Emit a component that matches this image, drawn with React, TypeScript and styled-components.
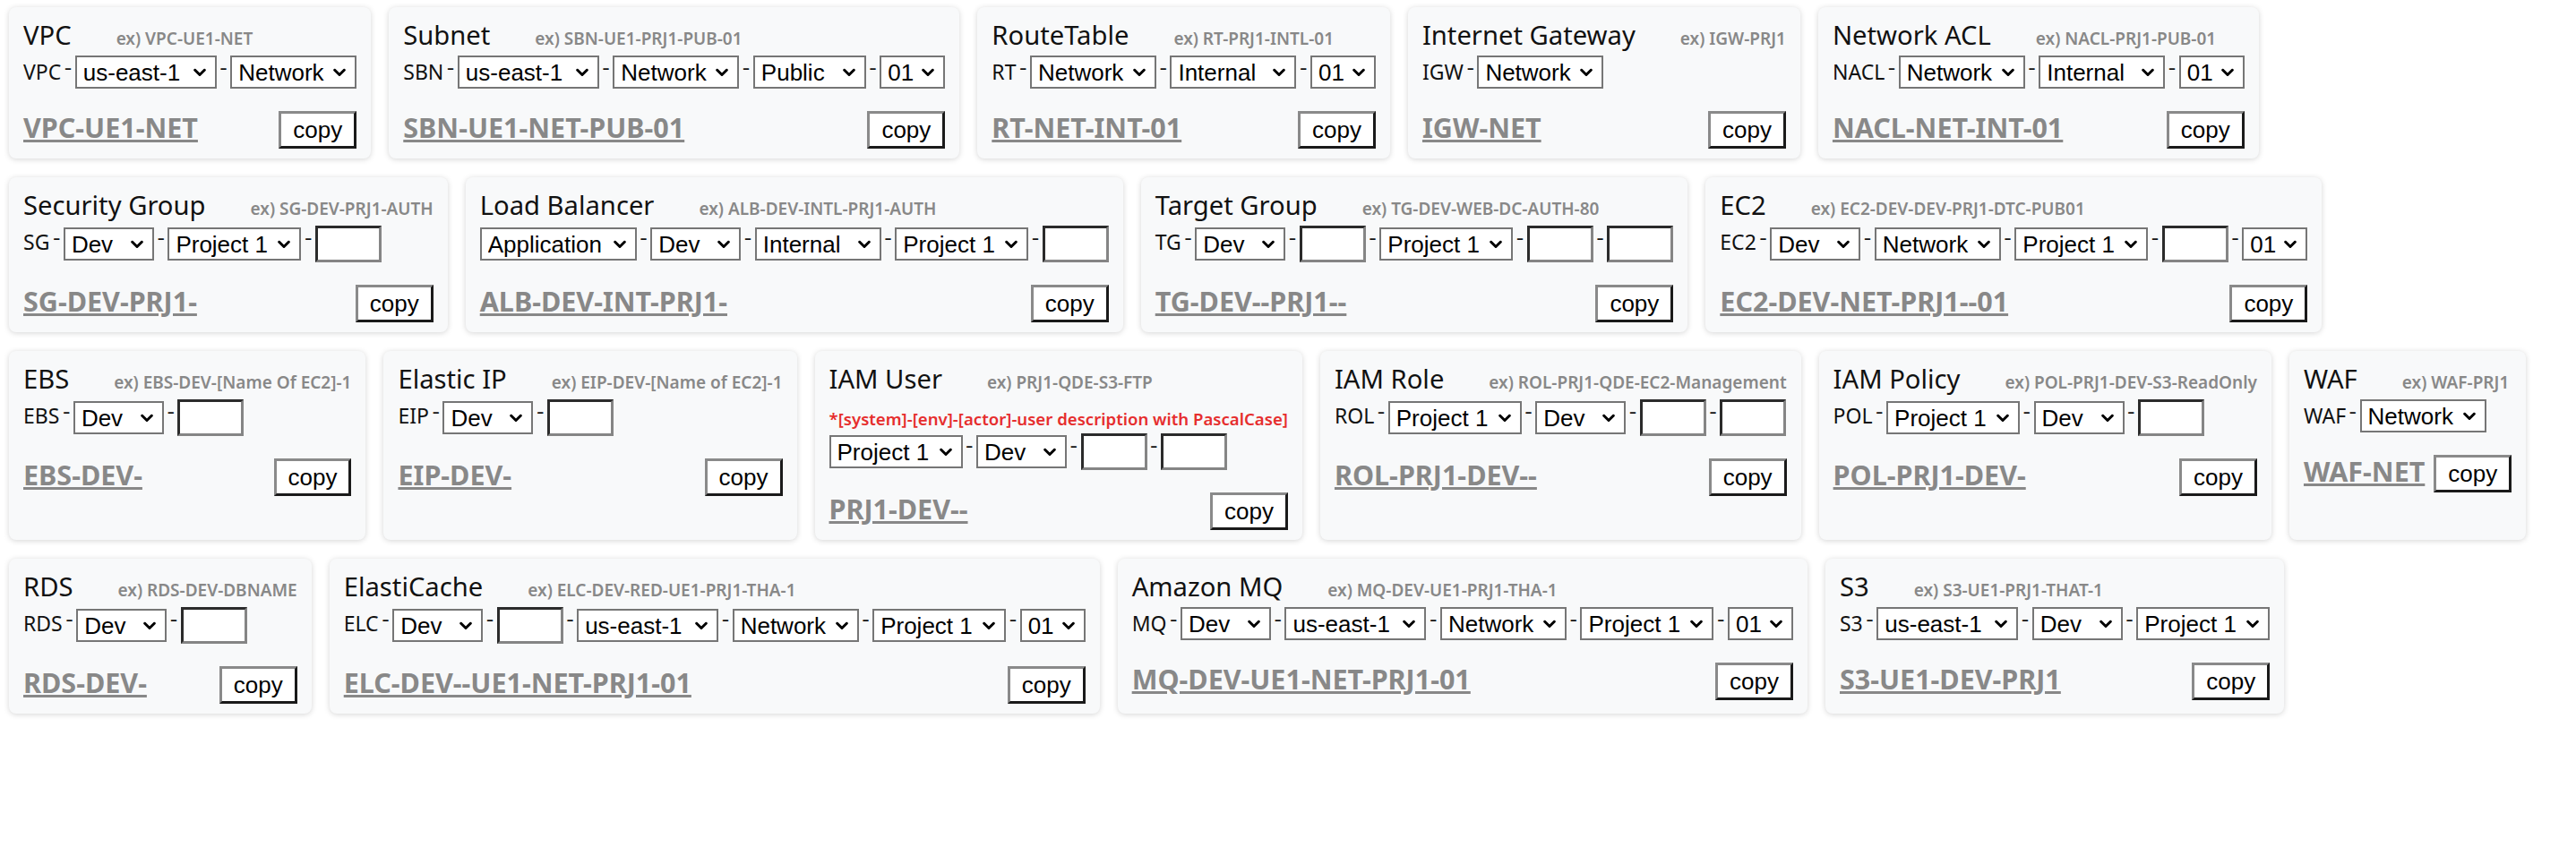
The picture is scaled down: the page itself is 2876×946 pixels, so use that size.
import { useState } from "react";
import styled, { createGlobalStyle } from "styled-components";

const GlobalStyle = createGlobalStyle`
    body {
        margin: 0;
        background: #ffffff;
        font-family: "Noto Sans", "Noto Sans CJK KR", sans-serif;
        color: #111111;
    }
`;

const Board = styled.div`
    display: flex;
    flex-wrap: wrap;
    align-items: stretch;
    gap: 21px 20px;
    padding: 8px 10px;
`;

const Card = styled.div`
    display: flex;
    flex-direction: column;
    padding: 11px 16px;
    background: #f8f9fa;
    border-radius: 8px;
    box-shadow: 0 1px 6px rgba(0, 0, 0, 0.17);
`;

const TitleRow = styled.div`
    display: flex;
    align-items: baseline;
    white-space: nowrap;
`;

const Title = styled.span`
    font-size: 29.2px;
    line-height: 40px;
`;

const Example = styled.span`
    margin-left: 50px;
    font-size: 19px;
    font-weight: 600;
    color: #888888;
`;

const Note = styled.div`
    margin-top: 12px;
    font-size: 18.6px;
    font-weight: 600;
    line-height: 26px;
    color: #e62e2e;
    white-space: nowrap;
`;

const FieldRow = styled.div`
    display: flex;
    align-items: center;
    margin-top: 3px;
`;

const Prefix = styled.span`
    align-self: flex-start;
    font-size: 23px;
    line-height: 37px;
`;

const Dash = styled.span`
    align-self: flex-start;
    width: 15.5px;
    text-align: center;
    font-family: "Liberation Serif", serif;
    font-size: 24px;
    line-height: 26px;
`;

const SelectBox = styled.span<{ $w: number }>`
    position: relative;
    display: inline-flex;
    width: ${props => props.$w}px;
    flex-shrink: 0;
`;

const Select = styled.select`
    appearance: none;
    width: 100%;
    height: 37px;
    box-sizing: border-box;
    margin: 0;
    padding: 0 28px 0 7px;
    border: 2px solid #767676;
    border-radius: 0;
    background: #ffffff;
    color: #000000;
    font-family: "Liberation Sans", Arial, sans-serif;
    font-size: 26px;
    outline: none;
`;

const Chevron = styled.svg`
    position: absolute;
    right: 12px;
    top: 50%;
    transform: translateY(-50%);
    pointer-events: none;
`;

const TextBox = styled.input`
    width: 74px;
    height: 41px;
    box-sizing: border-box;
    margin: 0;
    padding: 0 4px;
    border: 3px solid;
    border-color: #2b2b2b #858585 #858585 #2b2b2b;
    background: #ffffff;
    font-family: "Liberation Sans", Arial, sans-serif;
    font-size: 22px;
    outline: none;
    flex-shrink: 0;
`;

const ResultRow = styled.div`
    display: flex;
    justify-content: space-between;
    align-items: baseline;
    gap: 10px;
    margin-top: 21.5px;
`;

const ResultLink = styled.a`
    font-size: 30.5px;
    font-weight: 700;
    color: #888888;
    text-decoration: underline;
    white-space: nowrap;
    cursor: pointer;
`;

const CopyButton = styled.button`
    height: 42px;
    box-sizing: border-box;
    margin: 0;
    padding: 0 13px;
    border: 3px solid;
    border-color: #8a8a8a #1a1a1a #1a1a1a #8a8a8a;
    background: #ffffff;
    color: #000000;
    font-family: "Liberation Sans", Arial, sans-serif;
    font-size: 26px;
    cursor: pointer;
`;

type Option = [string, string];

const selectKinds: Record<string, { width: number; options: Option[] }> = {
    region: { width: 158, options: [["us-east-1", "UE1"], ["us-west-2", "UW2"], ["ap-northeast-2", "AN2"]] },
    network: { width: 141, options: [["Network", "NET"], ["Web", "WEB"], ["App", "APP"], ["DB", "DB"]] },
    scope: { width: 141, options: [["Internal", "INT"], ["External", "EXT"]] },
    access: { width: 126, options: [["Public", "PUB"], ["Private", "PRI"]] },
    seq: { width: 73, options: [["01", "01"], ["02", "02"], ["03", "03"], ["04", "04"]] },
    env: { width: 101, options: [["Dev", "DEV"], ["Stg", "STG"], ["Prd", "PRD"]] },
    project: { width: 149, options: [["Project 1", "PRJ1"], ["Project 2", "PRJ2"], ["Project 3", "PRJ3"]] },
    lb: { width: 175, options: [["Application", "ALB"], ["Network", "NLB"]] },
};

type Part =
    | { t: "label"; v: string }
    | { t: "select"; kind: string }
    | { t: "input" };

const lbl = (v: string): Part => ({ t: "label", v });
const sel = (kind: string): Part => ({ t: "select", kind });
const box: Part = { t: "input" };

interface CardData {
    title: string;
    example: string;
    note?: string;
    parts: Part[];
}

const cards: CardData[] = [
    { title: "VPC", example: "ex) VPC-UE1-NET", parts: [lbl("VPC"), sel("region"), sel("network")] },
    { title: "Subnet", example: "ex) SBN-UE1-PRJ1-PUB-01", parts: [lbl("SBN"), sel("region"), sel("network"), sel("access"), sel("seq")] },
    { title: "RouteTable", example: "ex) RT-PRJ1-INTL-01", parts: [lbl("RT"), sel("network"), sel("scope"), sel("seq")] },
    { title: "Internet Gateway", example: "ex) IGW-PRJ1", parts: [lbl("IGW"), sel("network")] },
    { title: "Network ACL", example: "ex) NACL-PRJ1-PUB-01", parts: [lbl("NACL"), sel("network"), sel("scope"), sel("seq")] },
    { title: "Security Group", example: "ex) SG-DEV-PRJ1-AUTH", parts: [lbl("SG"), sel("env"), sel("project"), box] },
    { title: "Load Balancer", example: "ex) ALB-DEV-INTL-PRJ1-AUTH", parts: [sel("lb"), sel("env"), sel("scope"), sel("project"), box] },
    { title: "Target Group", example: "ex) TG-DEV-WEB-DC-AUTH-80", parts: [lbl("TG"), sel("env"), box, sel("project"), box, box] },
    { title: "EC2", example: "ex) EC2-DEV-DEV-PRJ1-DTC-PUB01", parts: [lbl("EC2"), sel("env"), sel("network"), sel("project"), box, sel("seq")] },
    { title: "EBS", example: "ex) EBS-DEV-[Name Of EC2]-1", parts: [lbl("EBS"), sel("env"), box] },
    { title: "Elastic IP", example: "ex) EIP-DEV-[Name of EC2]-1", parts: [lbl("EIP"), sel("env"), box] },
    {
        title: "IAM User",
        example: "ex) PRJ1-QDE-S3-FTP",
        note: "*[system]-[env]-[actor]-user description with PascalCase]",
        parts: [sel("project"), sel("env"), box, box],
    },
    { title: "IAM Role", example: "ex) ROL-PRJ1-QDE-EC2-Management", parts: [lbl("ROL"), sel("project"), sel("env"), box, box] },
    { title: "IAM Policy", example: "ex) POL-PRJ1-DEV-S3-ReadOnly", parts: [lbl("POL"), sel("project"), sel("env"), box] },
    { title: "WAF", example: "ex) WAF-PRJ1", parts: [lbl("WAF"), sel("network")] },
    { title: "RDS", example: "ex) RDS-DEV-DBNAME", parts: [lbl("RDS"), sel("env"), box] },
    { title: "ElastiCache", example: "ex) ELC-DEV-RED-UE1-PRJ1-THA-1", parts: [lbl("ELC"), sel("env"), box, sel("region"), sel("network"), sel("project"), sel("seq")] },
    { title: "Amazon MQ", example: "ex) MQ-DEV-UE1-PRJ1-THA-1", parts: [lbl("MQ"), sel("env"), sel("region"), sel("network"), sel("project"), sel("seq")] },
    { title: "S3", example: "ex) S3-UE1-PRJ1-THAT-1", parts: [lbl("S3"), sel("region"), sel("env"), sel("project")] },
];

function NameCard({ data }: { data: CardData }) {
    const [values, setValues] = useState<string[]>(() =>
        data.parts.map(p => (p.t === "select" ? selectKinds[p.kind].options[0][1] : p.t === "label" ? p.v : ""))
    );

    const update = (i: number, v: string) => {
        setValues(prev => prev.map((old, j) => (j === i ? v : old)));
    };

    const result = values.join("-");

    return (
        <Card>
            <TitleRow>
                <Title>{data.title}</Title>
                <Example>{data.example}</Example>
            </TitleRow>
            {data.note && <Note>{data.note}</Note>}
            <FieldRow>
                {data.parts.map((p, i) => (
                    <span key={i} style={{ display: "contents" }}>
                        {i > 0 && <Dash>-</Dash>}
                        {p.t === "label" && <Prefix>{p.v}</Prefix>}
                        {p.t === "select" && (
                            <SelectBox $w={selectKinds[p.kind].width}>
                                <Select value={values[i]} onChange={e => update(i, e.target.value)}>
                                    {selectKinds[p.kind].options.map(([label, code]) => (
                                        <option key={code} value={code}>{label}</option>
                                    ))}
                                </Select>
                                <Chevron width="14" height="9" viewBox="0 0 14 9">
                                    <path d="M1.7 1.7 L7 7 L12.3 1.7" fill="none" stroke="#000" strokeWidth="3" strokeLinecap="round" strokeLinejoin="round" />
                                </Chevron>
                            </SelectBox>
                        )}
                        {p.t === "input" && <TextBox value={values[i]} onChange={e => update(i, e.target.value)} />}
                    </span>
                ))}
            </FieldRow>
            <ResultRow>
                <ResultLink>{result}</ResultLink>
                <CopyButton onClick={() => navigator.clipboard?.writeText(result)}>copy</CopyButton>
            </ResultRow>
        </Card>
    );
}

function App() {
    return (
        <>
            <GlobalStyle />
            <Board>
                {cards.map(c => (
                    <NameCard key={c.title} data={c} />
                ))}
            </Board>
        </>
    );
}

export default App;
